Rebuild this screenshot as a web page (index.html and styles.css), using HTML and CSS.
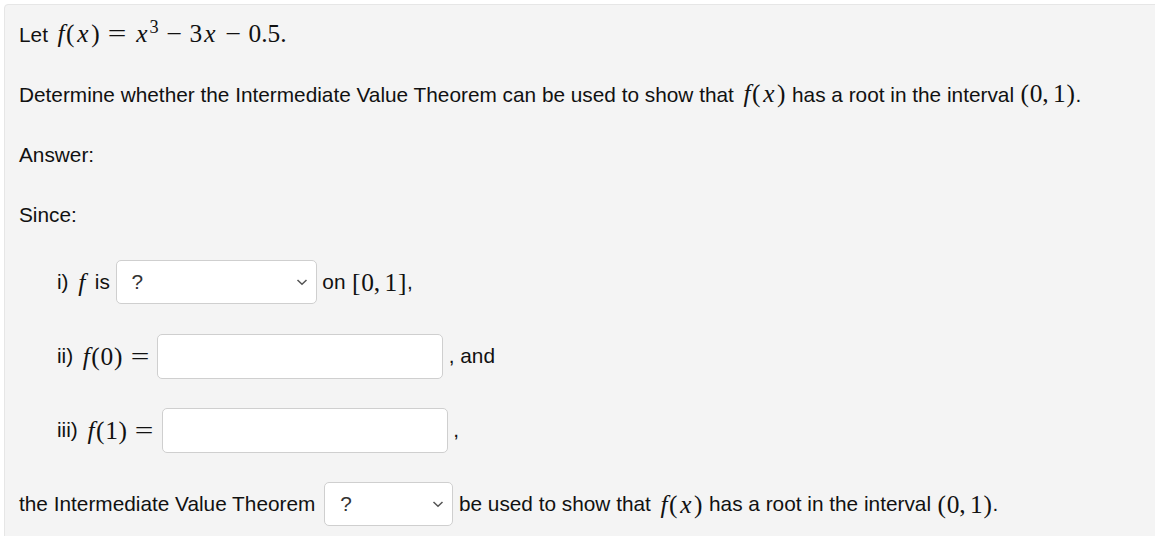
FILE: index.html
```html
<!DOCTYPE html>
<html>
<head>
<meta charset="utf-8">
<link rel="stylesheet" href="styles.css">
</head>
<body>
<div class="panel">
  <div class="line">Let <span class="m"><i class="f">f</i><b class="p">(</b><i class="x">x</i><b class="p">)</b><span class="rel"><span>=</span></span><i class="x">x</i><sup>3</sup><span class="bin"><span>−</span></span>3<i class="x">x</i><span class="bin"><span>−</span></span>0.5.</span></div>
  <div class="line">Determine whether the Intermediate Value Theorem can be used to show that <span class="m"><i class="f">f</i><b class="p">(</b><i class="x">x</i><b class="p">)</b></span> has a root in the interval <span class="m"><b class="p">(</b>0,<span class="sp"></span>1<b class="p">)</b></span>.</div>
  <div class="line">Answer:</div>
  <div class="line">Since:</div>
  <div class="row indent"><span>i)&nbsp;</span><span class="m"><i class="f">f</i></span><span class="gap">&nbsp;is&nbsp;</span><div class="select wide"><span>?</span><svg width="14" height="10" viewBox="0 0 14 10"><path d="M2.5 3 L7 7.3 L11.5 3" fill="none" stroke="#555" stroke-width="1.5"/></svg></div><span>&nbsp;on&nbsp;</span><span class="m"><b class="p">[</b>0,<span class="sp"></span>1<b class="p">]</b></span><span>,</span></div>
  <div class="row indent"><span>ii)&nbsp;</span><span class="m"><i class="f">f</i><b class="p">(</b>0<b class="p">)</b><span class="rel"><span>=</span></span></span><div class="input"></div><span>&nbsp;, and</span></div>
  <div class="row indent"><span>iii)&nbsp;</span><span class="m"><i class="f">f</i><b class="p">(</b>1<b class="p">)</b><span class="rel"><span>=</span></span></span><div class="input"></div><span>&nbsp;,</span></div>
  <div class="row"><span>the Intermediate Value Theorem&nbsp;</span><div class="select narrow"><span>?</span><svg width="14" height="10" viewBox="0 0 14 10"><path d="M2.5 3 L7 7.3 L11.5 3" fill="none" stroke="#555" stroke-width="1.5"/></svg></div><span>&nbsp;be used to show that&nbsp;</span><span class="m"><i class="f">f</i><b class="p">(</b><i class="x">x</i><b class="p">)</b></span><span>&nbsp;has a root in the interval&nbsp;</span><span class="m"><b class="p">(</b>0,<span class="sp"></span>1<b class="p">)</b></span><span>.</span></div>
</div>
</body>
</html>
```
FILE: styles.css
```css
html, body {
  margin: 0;
  padding: 0;
  background: #ffffff;
  overflow: hidden;
}
.panel {
  margin: 4px 0 0 4px;
  width: 1300px;
  height: 600px;
  box-sizing: border-box;
  background: #f4f4f4;
  border: 1px solid #e6e6e6;
  border-radius: 4px;
  padding: 15px 14px;
  display: flex;
  flex-direction: column;
  gap: 30px;
  font-family: "Liberation Sans", Arial, sans-serif;
  font-size: 20.8px;
  color: #111;
}
.line {
  line-height: 30px;
  height: 30px;
  white-space: pre;
}
.line .m {
  line-height: 0;
}
.row {
  display: flex;
  align-items: center;
  height: 44px;
  white-space: pre;
}
.row.indent {
  padding-left: 38px;
}
.gap {
  padding-left: 3px;
}
.m {
  font-family: "Liberation Serif", "Times New Roman", serif;
  font-size: 25.4px;
  white-space: nowrap;
  line-height: 30px;
}
.m i, .m b {
  display: inline-block;
  font-weight: normal;
}
.m i {
  font-style: italic;
}
.m i.f {
  width: 0.46em;
  text-align: right;
  padding-right: 0.03em;
  box-sizing: border-box;
}
.m i.x {
  width: 0.6em;
  text-align: center;
}
.m b.p {
  width: 0.389em;
  text-align: center;
}
.m sup {
  font-size: 0.72em;
  vertical-align: 0.5em;
  line-height: 0;
}
.rel, .bin {
  display: inline-block;
  width: 0.778em;
  text-align: center;
}
.rel {
  margin: 0 0.2778em;
}
.bin {
  margin: 0 0.2222em;
}
.rel span, .bin span {
  display: inline-block;
  transform: scaleX(1.3);
}
.bin span {
  transform: scaleX(1.1);
}
.sp {
  display: inline-block;
  width: 0.17em;
}
.select {
  box-sizing: border-box;
  height: 44px;
  background: #fff;
  border: 1px solid #cfcfcf;
  border-radius: 5px;
  display: flex;
  align-items: center;
  justify-content: space-between;
  padding: 0 7px 0 15px;
  color: #333;
}
.select.wide {
  width: 201px;
}
.select.narrow {
  width: 129px;
  margin-left: 3px;
}
.input {
  box-sizing: border-box;
  width: 286px;
  height: 45px;
  background: #fff;
  border: 1px solid #cfcfcf;
  border-radius: 5px;
}
```
